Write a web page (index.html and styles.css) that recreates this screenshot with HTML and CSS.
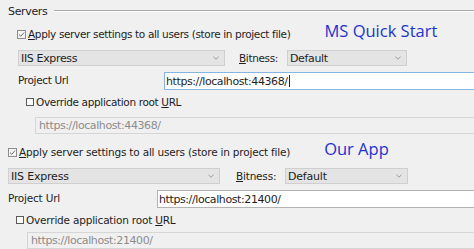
FILE: index.html
```html
<!DOCTYPE html>
<html>
<head>
<meta charset="utf-8">
<link rel="stylesheet" href="styles.css">
</head>
<body>
<div class="page">
  <section class="sec sec-top">
    <div class="group-title"><span>Servers</span><span class="rule"></span></div>
    <div class="row check-row">
      <span class="cb cb-on"><svg width="9" height="9" viewBox="0 0 9 9"><rect x="0.5" y="0.5" width="8" height="8" fill="#f4f4f4" stroke="#8d8d8d"/><path d="M2 4.6 L3.8 6.3 L7 2.6" fill="none" stroke="#6d6d6d" stroke-width="1"/></svg></span>
      <span class="txt"><u>A</u>pply server settings to all users (store in project file)</span>
      <span class="note">MS Quick Start</span>
    </div>
    <div class="row combo-row">
      <div class="combo combo-server"><span>IIS Express</span><svg class="chev" width="6" height="4" viewBox="0 0 6 4"><path d="M0.5 0.8 L3 3.2 L5.5 0.8" fill="none" stroke="#9a9a9a"/></svg></div>
      <span class="lbl bit"><u>B</u>itness:</span>
      <div class="combo combo-bit"><span>Default</span><svg class="chev" width="6" height="4" viewBox="0 0 6 4"><path d="M0.5 0.8 L3 3.2 L5.5 0.8" fill="none" stroke="#9a9a9a"/></svg></div>
    </div>
    <div class="row url-row">
      <span class="lbl url-lbl">Project Url</span>
      <div class="input focused"><span>https://localhost:44368/</span><span class="caret"></span></div>
    </div>
    <div class="row ov-row">
      <span class="cb cb-off"><svg width="8" height="8" viewBox="0 0 8 8"><rect x="0.5" y="0.5" width="7" height="7" fill="#fafafa" stroke="#5a5a5a"/></svg></span>
      <span class="txt">Override application root <u>U</u>RL</span>
    </div>
    <div class="disabled"><span>https://localhost:44368/</span></div>
  </section>

  <section class="sec sec-bot">
    <div class="row check-row">
      <span class="cb cb-on"><svg width="9" height="9" viewBox="0 0 9 9"><rect x="0.5" y="0.5" width="8" height="8" fill="#f4f4f4" stroke="#8d8d8d"/><path d="M2 4.6 L3.8 6.3 L7 2.6" fill="none" stroke="#6d6d6d" stroke-width="1"/></svg></span>
      <span class="txt"><u>A</u>pply server settings to all users (store in project file)</span>
      <span class="note">Our App</span>
    </div>
    <div class="row combo-row">
      <div class="combo combo-server"><span>IIS Express</span><svg class="chev" width="6" height="4" viewBox="0 0 6 4"><path d="M0.5 0.8 L3 3.2 L5.5 0.8" fill="none" stroke="#9a9a9a"/></svg></div>
      <span class="lbl bit"><u>B</u>itness:</span>
      <div class="combo combo-bit"><span>Default</span><svg class="chev" width="6" height="4" viewBox="0 0 6 4"><path d="M0.5 0.8 L3 3.2 L5.5 0.8" fill="none" stroke="#9a9a9a"/></svg></div>
    </div>
    <div class="row url-row">
      <span class="lbl url-lbl">Project Url</span>
      <div class="input"><span>https://localhost:21400/</span></div>
    </div>
    <div class="row ov-row">
      <span class="cb cb-off"><svg width="8" height="8" viewBox="0 0 8 8"><rect x="0.5" y="0.5" width="7" height="7" fill="#fafafa" stroke="#5a5a5a"/></svg></span>
      <span class="txt">Override application root <u>U</u>RL</span>
    </div>
    <div class="disabled"><span>https://localhost:21400/</span></div>
  </section>
</div>
</body>
</html>
```

FILE: styles.css
```css
html, body {
  margin: 0;
  padding: 0;
}
body {
  width: 474px;
  height: 249px;
  overflow: hidden;
  background: #f0f0f0;
  font-family: "DejaVu Sans", Verdana, sans-serif;
  font-size: 10.5px;
  letter-spacing: -0.35px;
  color: #1e1e1e;
}
.page {
  display: flex;
  flex-direction: column;
}
u {
  text-decoration-thickness: 1px;
  text-underline-offset: 1px;
}
.sec {
  display: flex;
  flex-direction: column;
}
.sec-top {
  padding-left: 8px;
  --cb-x: 9px;
  --ind: 10px;
  --server-w: 207px;
  --bit-gap: 14px;
  --bitw: 48px;
  --bit-combo-w: 120px;
  --lbl-w: 146px;
  --ov-x: 18px;
  --dis-x: 27px;
  --note-gap: 34px;
  --dis-top: 5px;
}
.sec-bot {
  padding-left: 8px;
  margin-top: 6px;
  letter-spacing: -0.2px;
  --cb-x: 0px;
  --ind: 0px;
  --server-w: 212px;
  --bit-gap: 16px;
  --bitw: 49px;
  --bit-combo-w: 123px;
  --lbl-w: 149px;
  --ov-x: 8px;
  --dis-x: 19px;
  --note-gap: 34px;
  --dis-top: 2px;
}
.group-title {
  height: 22px;
  display: flex;
  align-items: center;
  font-size: 11px;
}
.rule {
  flex: 1;
  margin-left: 7px;
  height: 0;
  border-top: 1px solid #a8a8a8;
  border-bottom: 1px solid #ffffff;
}
.row {
  display: flex;
  align-items: center;
}
.check-row {
  height: 24px;
  padding-left: var(--cb-x);
}
.cb {
  display: flex;
  align-items: center;
  margin-right: 2px;
}
.note {
  margin-left: var(--note-gap);
  font-family: "Open Sans", "Noto Sans", sans-serif;
  font-size: 16.5px;
  letter-spacing: 0;
  color: #2233cc;
  position: relative;
  top: -3px;
  line-height: 20px;
}
.combo-row {
  height: 24px;
  padding-left: var(--ind);
}
.combo {
  height: 16px;
  box-sizing: border-box;
  background: #e4e4e4;
  border: 1px solid #cfcfcf;
  display: flex;
  align-items: center;
  justify-content: space-between;
  padding: 0 5px 0 2px;
  font-size: 11px;
}
.combo-server {
  width: var(--server-w);
}
.combo-bit {
  width: var(--bit-combo-w);
}
.chev {
  display: block;
}
.bit {
  margin-left: var(--bit-gap);
  width: var(--bitw);
}
.url-row {
  height: 22px;
  padding-left: var(--ind);
}
.url-lbl {
  width: var(--lbl-w);
  position: relative;
  top: -1px;
}
.input {
  flex: 1;
  height: 18px;
  box-sizing: border-box;
  background: #ffffff;
  border: 1px solid #b4b4b4;
  border-right: none;
  display: flex;
  align-items: center;
  padding-left: 1px;
  font-size: 11px;
  letter-spacing: -0.4px;
}
.input.focused {
  border-color: #84b5e3;
}
.caret {
  width: 1px;
  height: 12px;
  background: #222;
  margin-left: 1px;
}
.ov-row {
  height: 20px;
  padding-left: var(--ov-x);
}
.disabled {
  margin-top: var(--dis-top);
  margin-left: var(--dis-x);
  height: 17px;
  box-sizing: border-box;
  border: 1px solid #d6d6d6;
  border-right: none;
  background: #f0f0f0;
  color: #8c8c8c;
  display: flex;
  align-items: center;
  padding-left: 3px;
  font-size: 11px;
  letter-spacing: -0.4px;
}
```
